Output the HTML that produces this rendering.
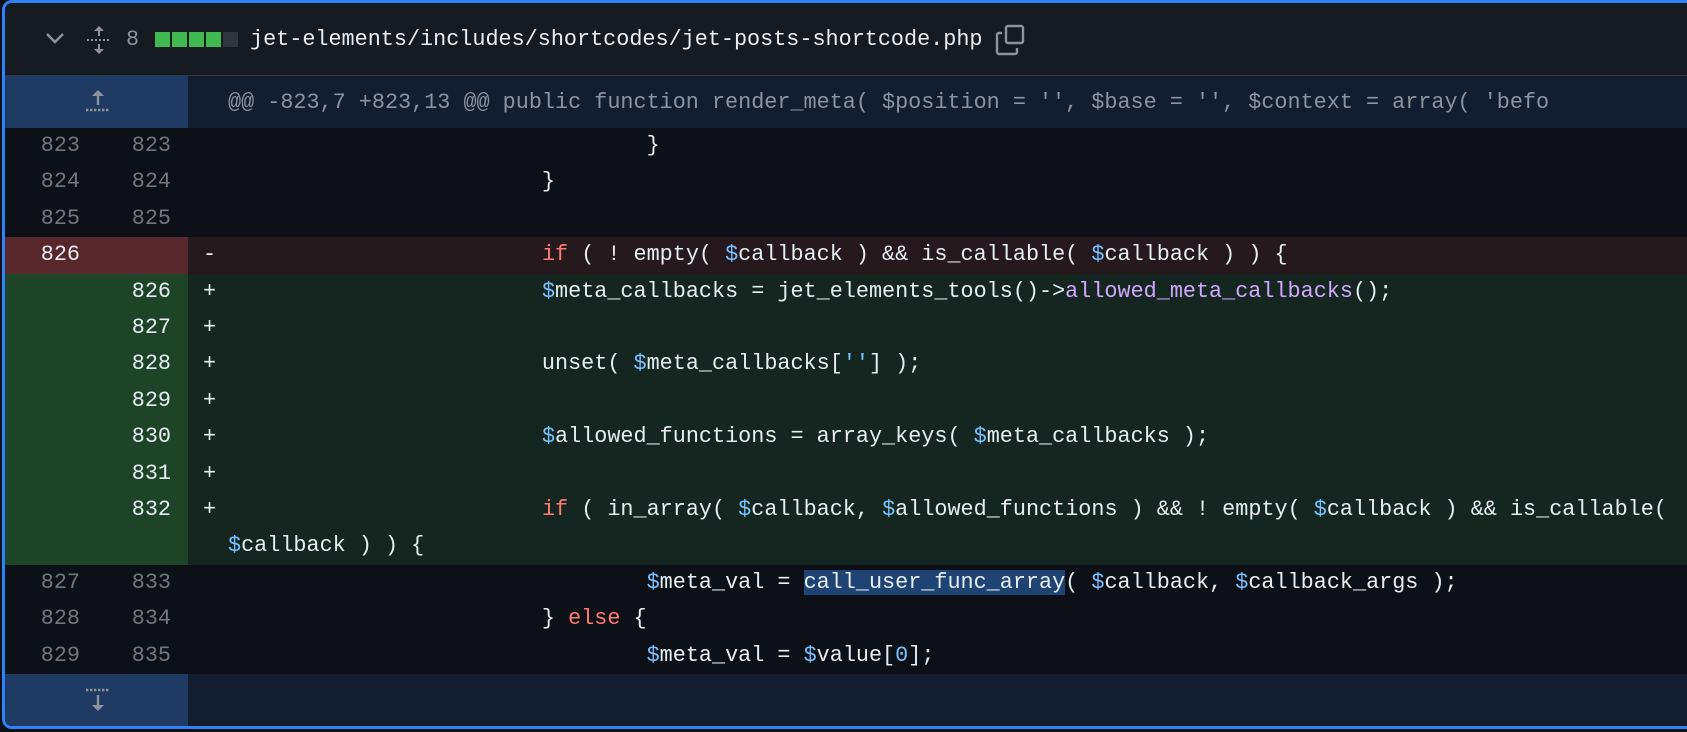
<!DOCTYPE html>
<html><head><style>
*{margin:0;padding:0;box-sizing:border-box}
body{width:1687px;height:732px;background:#0d1117;overflow:hidden;font-family:"Liberation Mono",monospace;}
.frame{position:absolute;left:2px;top:0;width:1700px;height:729px;border:3px solid #2f81f7;border-radius:10px;background:#0d1117;overflow:hidden}
.hdr{position:absolute;left:0;top:0;right:0;height:73px;background:#161b22;border-bottom:1px solid #30363d}
.hdr .t{position:absolute;top:22px;font-size:21.8px;color:#e6edf3;line-height:30px}
.hunk{position:absolute;left:0;top:73px;right:0;height:52px;background:#121d2f}
.hg{position:absolute;left:0;top:0;width:183px;height:100%;background:#1f3b63}
.hunk .t{position:absolute;left:223px;top:11px;font-size:21.8px;color:#8b949e;line-height:32px;white-space:pre}
.row{position:absolute;left:0;right:0;height:36.4px;font-size:21.8px;line-height:36.4px;white-space:pre;color:#e6edf3}
.g{position:absolute;left:0;top:0;width:183px;height:100%}
.o,.n{position:absolute;width:60px;text-align:right;color:#6e7681}
.o{left:15px}.n{left:106px}
.m{position:absolute;left:198px}
.c{position:absolute;left:223px}
.del{background:#25191d}.del .g{background:#58272b}
.add{background:#14261f}.add .g{background:#1e4428}
.del .o,.add .n{color:#e6edf3}
.k{color:#ff7b72}.v{color:#79c0ff}.p{color:#d2a8ff}
.hl{background:#1f4373}
</style></head><body>
<div class="frame">
<div class="hdr">
<svg style="position:absolute;left:40px;top:28px" width="20" height="14" viewBox="0 0 20 14"><path d="M2 3l8 8 8-8" stroke="#8b949e" stroke-width="2.4" fill="none"/></svg>
<svg style="position:absolute;left:80px;top:22px" width="28" height="30" viewBox="0 0 28 30"><path d="M14 1l-5 5h10zM14 29l-5-5h10z" fill="#8b949e"/><path d="M14 5v6M14 19v6" stroke="#8b949e" stroke-width="2"/><path d="M2 15h24" stroke="#8b949e" stroke-width="2" stroke-dasharray="2 2"/></svg>
<div class="t" style="left:121px;color:#8b949e">8</div>
<div style="position:absolute;left:150px;top:29px;display:flex;gap:2px">
<i style="width:15px;height:15px;background:#3fb950;display:block"></i><i style="width:15px;height:15px;background:#3fb950;display:block"></i><i style="width:15px;height:15px;background:#3fb950;display:block"></i><i style="width:15px;height:15px;background:#3fb950;display:block"></i><i style="width:15px;height:15px;background:#30363d;display:block"></i></div>
<div class="t" style="left:245px">jet-elements/includes/shortcodes/jet-posts-shortcode.php</div>
<svg style="position:absolute;left:990px;top:21px" width="32" height="32" viewBox="0 0 32 32"><rect x="11" y="2" width="17" height="17" rx="2" stroke="#8b949e" stroke-width="2.4" fill="none"/><path d="M7 9H4a2 2 0 0 0-2 2v17a2 2 0 0 0 2 2h16a2 2 0 0 0 2-2v-4" stroke="#8b949e" stroke-width="2.4" fill="none"/></svg>
</div>
<div class="hunk"><div class="hg"><svg style="position:absolute;left:80px;top:13px" width="26" height="24" viewBox="0 0 26 24"><path d="M13 1l-6 6h12z" fill="#8b949e"/><path d="M13 6v10" stroke="#8b949e" stroke-width="2.4"/><path d="M1 21h24" stroke="#8b949e" stroke-width="2.4" stroke-dasharray="2.4 1.6"/></svg></div>
<div class="t">@@ -823,7 +823,13 @@ public function render_meta( $position = '', $base = '', $context = array( 'befo</div></div>

<div class="row" style="top:125px"><div class="g"><span class="o">823</span><span class="n">823</span></div><span class="c">                                }</span></div>
<div class="row" style="top:161.4px"><div class="g"><span class="o">824</span><span class="n">824</span></div><span class="c">                        }</span></div>
<div class="row" style="top:197.8px"><div class="g"><span class="o">825</span><span class="n">825</span></div></div>
<div class="row del" style="top:234.2px"><div class="g"><span class="o">826</span></div><span class="m">-</span><span class="c">                        <span class="k">if</span> ( ! empty( <span class="v">$</span>callback ) &amp;&amp; is_callable( <span class="v">$</span>callback ) ) {</span></div>
<div class="row add" style="top:270.6px"><div class="g"><span class="n">826</span></div><span class="m">+</span><span class="c">                        <span class="v">$</span>meta_callbacks = jet_elements_tools()-&gt;<span class="p">allowed_meta_callbacks</span>();</span></div>
<div class="row add" style="top:307px"><div class="g"><span class="n">827</span></div><span class="m">+</span></div>
<div class="row add" style="top:343.4px"><div class="g"><span class="n">828</span></div><span class="m">+</span><span class="c">                        unset( <span class="v">$</span>meta_callbacks[<span class="v">''</span>] );</span></div>
<div class="row add" style="top:379.8px"><div class="g"><span class="n">829</span></div><span class="m">+</span></div>
<div class="row add" style="top:416.2px"><div class="g"><span class="n">830</span></div><span class="m">+</span><span class="c">                        <span class="v">$</span>allowed_functions = array_keys( <span class="v">$</span>meta_callbacks );</span></div>
<div class="row add" style="top:452.6px"><div class="g"><span class="n">831</span></div><span class="m">+</span></div>
<div class="row add" style="top:489px;height:72.8px"><div class="g"><span class="n">832</span></div><span class="m">+</span><span class="c">                        <span class="k">if</span> ( in_array( <span class="v">$</span>callback, <span class="v">$</span>allowed_functions ) &amp;&amp; ! empty( <span class="v">$</span>callback ) &amp;&amp; is_callable(
<span class="v">$</span>callback ) ) {</span></div>
<div class="row" style="top:561.8px"><div class="g"><span class="o">827</span><span class="n">833</span></div><span class="c">                                <span class="v">$</span>meta_val = <span class="hl">call_user_func_array</span>( <span class="v">$</span>callback, <span class="v">$</span>callback_args );</span></div>
<div class="row" style="top:598.2px"><div class="g"><span class="o">828</span><span class="n">834</span></div><span class="c">                        } <span class="k">else</span> {</span></div>
<div class="row" style="top:634.6px"><div class="g"><span class="o">829</span><span class="n">835</span></div><span class="c">                                <span class="v">$</span>meta_val = <span class="v">$</span>value[<span class="v">0</span>];</span></div>
<div style="position:absolute;left:0;right:0;top:671px;height:60px;background:#121d2f"><div class="hg"><svg style="position:absolute;left:80px;top:14px" width="26" height="24" viewBox="0 0 26 24"><path d="M1 2h24" stroke="#8b949e" stroke-width="2.4" stroke-dasharray="2.4 1.6"/><path d="M13 7v10" stroke="#8b949e" stroke-width="2.4"/><path d="M13 23l-6-6h12z" fill="#8b949e"/></svg></div></div>
</div>
</body></html>
